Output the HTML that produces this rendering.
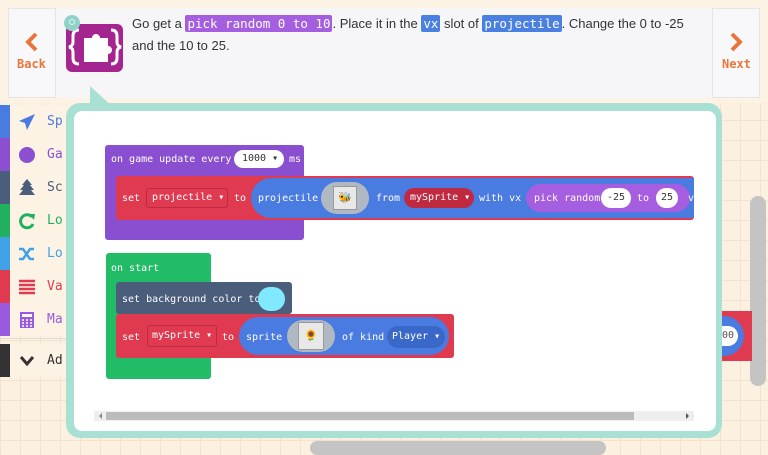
<!DOCTYPE html>
<html><head><meta charset="utf-8"><style>
*{box-sizing:border-box;margin:0;padding:0}
body{width:768px;height:449px;overflow:hidden;position:relative;font-family:"Liberation Sans",sans-serif;
background-color:#fcf1e0;background-image:linear-gradient(#f0e3cf 1px,transparent 1px),linear-gradient(90deg,#f0e3cf 1px,transparent 1px);background-size:20px 20px}
.a{position:absolute}
.mono{font-family:"DejaVu Sans Mono","Liberation Mono",monospace}
.cat{position:absolute;left:0;width:66px;height:33px;background:#fcf3e4;font-family:"DejaVu Sans Mono",monospace;font-size:13px;line-height:33px}
.cat i{position:absolute;left:0;top:0;width:10px;height:33px}
.cat span{position:absolute;left:47px}
.blk{position:absolute;font-family:"DejaVu Sans Mono",monospace;font-size:10px;color:#fff}
.pill{position:absolute;border-radius:12px}
.hl{color:#fff;font-size:12.5px;padding:1px 2px;border-radius:2px;letter-spacing:0}
</style></head><body>
<div class="a" style="left:0;top:0;width:768px;height:103px;background:#fcf3e4"></div>
<div class="a" style="left:8px;top:8px;width:48px;height:90px;background:#f8f8fa;border:1px solid #e8e4e0"></div>
<div class="a" style="left:56px;top:8px;width:656px;height:90px;background:#f6f6f9"></div>
<div class="a" style="left:712px;top:8px;width:48px;height:90px;background:#f8f8fa;border:1px solid #e8e4e0"></div>
<svg class="a" style="left:24px;top:32px" width="16" height="20"><path d="M12 2 L4 10 L12 18" stroke="#e8763a" stroke-width="4" fill="none"/></svg>
<div class="a mono" style="left:17px;top:57px;font-size:12px;font-weight:bold;color:#e8763a">Back</div>
<svg class="a" style="left:728px;top:32px" width="16" height="20"><path d="M4 2 L12 10 L4 18" stroke="#e8763a" stroke-width="4" fill="none"/></svg>
<div class="a mono" style="left:722px;top:57px;font-size:12px;font-weight:bold;color:#e8763a">Next</div>
<svg class="a" style="left:62px;top:14px" width="62" height="60">
<rect x="4" y="10" width="57" height="48" rx="6" fill="#a4258f"/>
<path d="M17 16 q-6 0 -6 6 v6 q0 4 -4 5 q4 1 4 5 v6 q0 6 6 6 M49 16 q6 0 6 6 v6 q0 4 4 5 q-4 1 -4 5 v6 q0 6 -6 6" stroke="#fff" stroke-width="3" fill="none"/>
<path d="M22 24 h8 a4 4 0 1 1 8 0 h8 v8 a4 4 0 1 1 0 8 v8 h-24z" fill="#fff"/>
<circle cx="10" cy="9" r="8" fill="#8fd3c8"/><circle cx="10" cy="8" r="2.5" fill="none" stroke="#e0f5f0" stroke-width="1"/>
</svg>
<div class="a" style="left:132px;top:13px;width:600px;white-space:nowrap;font-size:13px;line-height:22px;color:#333">Go get a <span class="mono hl" style="background:#a55ee0">pick random 0 to 10</span>. Place it in the <span class="mono hl" style="background:#4a80e0">vx</span> slot of <span class="mono hl" style="background:#4a80e0">projectile</span>. Change the 0 to -25<br>and the 10 to 25.</div>
<div class="cat" style="top:105px;color:#4a7be0"><i style="background:#4a7be0"></i><svg class="a" style="left:18px;top:8px" width="18" height="18"><path d="M17 1 L1 8 L7 10 L9 17z" fill="#4a7be0"/></svg><span>Sp</span></div>
<div class="cat" style="top:138px;color:#8b4fd0"><i style="background:#8b4fd0"></i><svg class="a" style="left:18px;top:8px" width="18" height="18"><circle cx="9" cy="9" r="8" fill="#8b4fd0"/></svg><span>Ga</span></div>
<div class="cat" style="top:171px;color:#4a5d7a"><i style="background:#4a5d7a"></i><svg class="a" style="left:18px;top:7px" width="18" height="20"><path d="M9 1 L14 7 H12 L16 12 H13 L17 17 H1 L5 12 H2 L6 7 H4z" fill="#4a5d7a"/></svg><span>Sc</span></div>
<div class="cat" style="top:204px;color:#20b060"><i style="background:#20b060"></i><svg class="a" style="left:18px;top:8px" width="18" height="18"><path d="M14 5 A6.5 6.5 0 1 0 15 12" stroke="#20b060" stroke-width="3" fill="none"/><path d="M11 2 L17 2 L16 8z" fill="#20b060"/></svg><span>Lo</span></div>
<div class="cat" style="top:237px;color:#40a0e8"><i style="background:#40a0e8"></i><svg class="a" style="left:18px;top:8px" width="18" height="18"><path d="M1 4 H5 L12 14 H16 M1 14 H5 L12 4 H16" stroke="#40a0e8" stroke-width="2.5" fill="none"/></svg><span>Lo</span></div>
<div class="cat" style="top:270px;color:#e03a50"><i style="background:#e03a50"></i><svg class="a" style="left:18px;top:8px" width="18" height="18"><path d="M1 3H17M1 7H17M1 11H17M1 15H17" stroke="#e03a50" stroke-width="2.5"/></svg><span>Va</span></div>
<div class="cat" style="top:303px;color:#9a5ae0"><i style="background:#9a5ae0"></i><svg class="a" style="left:18px;top:8px" width="18" height="18"><rect x="2" y="1" width="14" height="16" fill="#9a5ae0"/><rect x="4" y="3" width="10" height="3" fill="#fff"/><path d="M4 9h2M8 9h2M12 9h2M4 12h2M8 12h2M12 12h2M4 15h2M8 15h2M12 15h2" stroke="#fff" stroke-width="1.5"/></svg><span>Ma</span></div>
<div class="a" style="left:0;top:338px;width:66px;height:1px;background:#ddd"></div>
<div class="cat" style="top:344px;color:#333"><i style="background:#333"></i><svg class="a" style="left:19px;top:10px" width="16" height="14"><path d="M2 3 L8 10 L14 3" stroke="#333" stroke-width="3" fill="none"/></svg><span>Ad</span></div>
<div class="a" style="left:750px;top:196px;width:16px;height:190px;border-radius:8px;background:#c4c4c4"></div>
<div class="a" style="left:722px;top:311px;width:30px;height:50px;background:#e03a50"></div>
<div class="a" style="left:700px;top:316px;width:44px;height:40px;border-radius:20px;background:#4a7be0"></div>
<div class="a mono" style="left:706px;top:326px;width:32px;height:20px;border-radius:10px;background:#fff;font-size:10px;line-height:20px;text-align:right;padding-right:4px;color:#555">00</div>
<div class="a" style="left:310px;top:441px;width:296px;height:14px;border-radius:7px;background:#c4c4c4"></div>
<svg class="a" style="left:86px;top:86px" width="30" height="22"><path d="M4 0 L4 22 L28 22z" fill="#a8e0d4"/></svg>
<div class="a" style="left:66px;top:103px;width:656px;height:335px;background:#a8e0d4;border-radius:14px"></div>
<div class="a" style="left:74px;top:111px;width:642px;height:320px;background:#fff;border-radius:8px;overflow:hidden">
 <div class="blk" style="left:31px;top:34px;width:199px;height:95px;background:#8a4fd0;border-radius:3px"></div>
 <div class="blk" style="left:37px;top:43px">on game update every</div>
 <div class="pill blk" style="left:160px;top:39px;width:50px;height:18px;background:#fff;color:#333;line-height:18px;padding-left:8px">1000 ▾</div>
 <div class="blk" style="left:215px;top:43px">ms</div>
 <div class="blk" style="left:42px;top:65px;width:578px;height:44px;background:#e03a50;border-radius:3px"></div>
 <div class="blk" style="left:48px;top:82px">set</div>
 <div class="blk" style="left:72px;top:77px;width:82px;height:20px;border:1px solid #c02a40;line-height:18px;padding-left:5px;border-radius:3px">projectile ▾</div>
 <div class="blk" style="left:160px;top:82px">to</div>
 <div class="a" style="left:177px;top:67px;width:443px;height:40px;border-radius:20px 0 0 20px;background:#4a7be0"></div>
 <div class="blk" style="left:184px;top:82px">projectile</div>
 <div class="pill" style="left:247px;top:71px;width:48px;height:32px;border-radius:16px;background:#b0b8c4"></div>
 <div class="a" style="left:259px;top:75px;width:24px;height:24px;background:#e8e8e8;border:1px solid #999;text-align:center;font-size:11px;line-height:22px">🐝</div>
 <div class="blk" style="left:302px;top:82px">from</div>
 <div class="pill blk" style="left:330px;top:77px;width:70px;height:20px;background:#c02a40;line-height:20px;padding-left:6px">mySprite ▾</div>
 <div class="blk" style="left:405px;top:82px">with vx</div>
 <div class="pill" style="left:452px;top:73px;width:164px;height:28px;border-radius:14px;background:#a55ee0"></div>
 <div class="blk" style="left:460px;top:82px">pick random</div>
 <div class="pill blk" style="left:527px;top:77px;width:30px;height:20px;background:#fff;color:#333;line-height:20px;text-align:center">-25</div>
 <div class="blk" style="left:563px;top:82px">to</div>
 <div class="pill blk" style="left:582px;top:77px;width:22px;height:20px;background:#fff;color:#333;line-height:20px;text-align:center">25</div>
 <div class="blk" style="left:614px;top:82px">v</div>
 <div class="blk" style="left:32px;top:142px;width:105px;height:126px;background:#22bb66;border-radius:3px"></div>
 <div class="blk" style="left:37px;top:152px">on start</div>
 <div class="blk" style="left:42px;top:171px;width:176px;height:32px;background:#4a5d7a;border-radius:3px"></div>
 <div class="blk" style="left:48px;top:183px">set background color to</div>
 <div class="pill" style="left:184px;top:176px;width:27px;height:24px;background:#80e8ff"></div>
 <div class="blk" style="left:42px;top:203px;width:338px;height:44px;background:#e03a50;border-radius:3px"></div>
 <div class="blk" style="left:48px;top:221px">set</div>
 <div class="blk" style="left:73px;top:214px;width:70px;height:22px;border:1px solid #c02a40;line-height:20px;padding-left:4px;border-radius:3px">mySprite ▾</div>
 <div class="blk" style="left:148px;top:221px">to</div>
 <div class="pill" style="left:165px;top:206px;width:210px;height:38px;border-radius:19px;background:#4a7be0"></div>
 <div class="blk" style="left:172px;top:221px">sprite</div>
 <div class="pill" style="left:213px;top:209px;width:48px;height:32px;border-radius:16px;background:#b0b8c4"></div>
 <div class="a" style="left:224px;top:211px;width:26px;height:28px;background:#e8e8e8;border:1px solid #999;text-align:center;font-size:11px;line-height:26px">🌻</div>
 <div class="blk" style="left:268px;top:221px">of kind</div>
 <div class="pill blk" style="left:313px;top:215px;width:58px;height:22px;background:#3a68c8;line-height:22px;padding-left:5px">Player ▾</div>
 <div class="a" style="left:20px;top:300px;width:600px;height:10px;background:#eee"></div>
 <div class="a" style="left:32px;top:301px;width:528px;height:8px;background:#bbb"></div>
 <div class="a" style="left:22px;top:302px;width:0;height:0;border:3px solid transparent;border-right-color:#888"></div>
 <div class="a" style="left:612px;top:302px;width:0;height:0;border:3px solid transparent;border-left-color:#555"></div>
</div>
</body></html>
